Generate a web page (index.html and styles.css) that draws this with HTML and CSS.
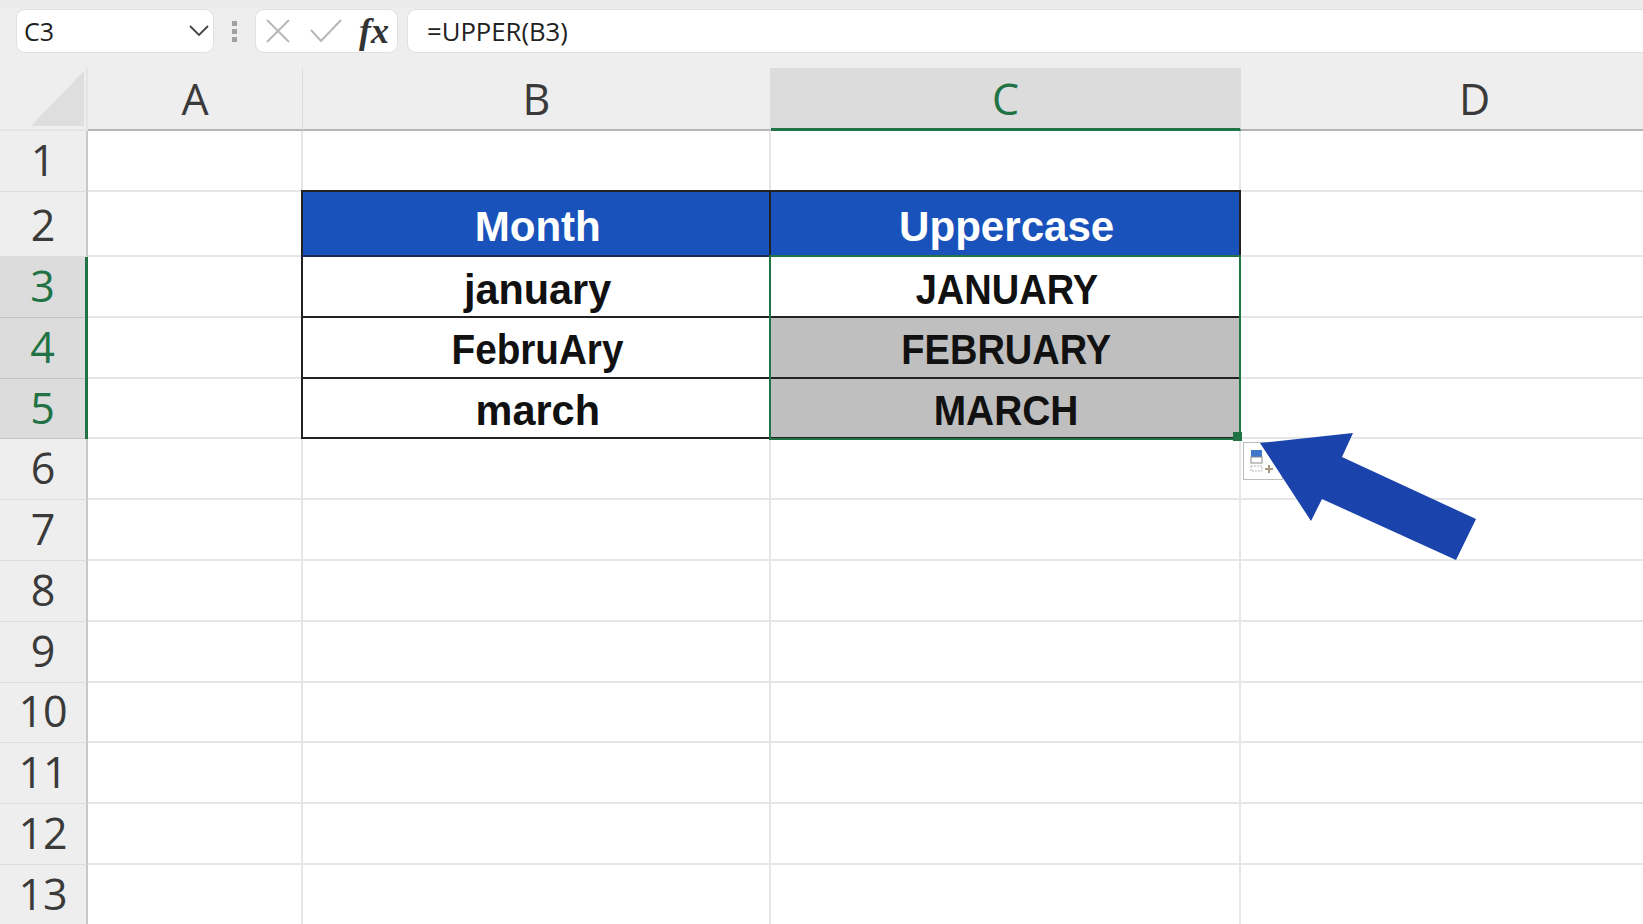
FILE: index.html
```html
<!DOCTYPE html>
<html lang="en">
<head>
<meta charset="utf-8">
<title>Excel UPPER</title>
<link rel="stylesheet" href="styles.css">
</head>
<body>
<div class="toolbar">
  <div class="box namebox"><span>C3</span>
    <svg class="chev" width="20" height="12" viewBox="0 0 20 12"><path d="M1 1 L10 10 L19 1" fill="none" stroke="#444" stroke-width="1.8"/></svg>
  </div>
  <div class="dots"><i></i><i></i><i></i></div>
  <div class="box fxbox">
    <svg width="24" height="24" viewBox="0 0 24 24"><path d="M1 1 L23 23 M23 1 L1 23" fill="none" stroke="#b8b8b8" stroke-width="2"/></svg>
    <svg class="check" width="32" height="24" viewBox="0 0 32 24"><path d="M1 11 L11 22 L31 1" fill="none" stroke="#b8b8b8" stroke-width="2"/></svg>
    <span class="fx">fx</span>
  </div>
  <div class="box formula">=UPPER(B3)</div>
</div>
<div class="sheet">
  <div class="corner"><svg width="53" height="55" viewBox="0 0 53 55"><path d="M0 55 L53 0 L53 55 Z" fill="#dedede"/></svg></div>
  <div class="colhead">A</div><div class="colhead">B</div><div class="colhead sel">C</div><div class="colhead last">D</div>

  <div class="rowhead">1</div><div class="c"></div><div class="c"></div><div class="c"></div><div class="c"></div>
  <div class="rowhead tall">2</div><div class="c"></div><div class="c th first"><span>Month</span></div><div class="c th"><span>Uppercase</span></div><div class="c"></div>
  <div class="rowhead sel">3</div><div class="c"></div><div class="c td first lower"><span>january</span></div><div class="c td"><span>JANUARY</span></div><div class="c"></div>
  <div class="rowhead sel">4</div><div class="c"></div><div class="c td first mixed"><span>FebruAry</span></div><div class="c td grey"><span>FEBRUARY</span></div><div class="c"></div>
  <div class="rowhead sel">5</div><div class="c"></div><div class="c td first lower"><span>march</span></div><div class="c td grey short"><span>MARCH</span></div><div class="c"></div>
  <div class="rowhead">6</div><div class="c"></div><div class="c"></div><div class="c"></div><div class="c"></div>
  <div class="rowhead">7</div><div class="c"></div><div class="c"></div><div class="c"></div><div class="c"></div>
  <div class="rowhead">8</div><div class="c"></div><div class="c"></div><div class="c"></div><div class="c"></div>
  <div class="rowhead">9</div><div class="c"></div><div class="c"></div><div class="c"></div><div class="c"></div>
  <div class="rowhead">10</div><div class="c"></div><div class="c"></div><div class="c"></div><div class="c"></div>
  <div class="rowhead">11</div><div class="c"></div><div class="c"></div><div class="c"></div><div class="c"></div>
  <div class="rowhead">12</div><div class="c"></div><div class="c"></div><div class="c"></div><div class="c"></div>
  <div class="rowhead">13</div><div class="c"></div><div class="c"></div><div class="c"></div><div class="c"></div>

  <div class="selection"><div class="handle"></div></div>
  <div class="paste">
    <svg width="24" height="26" viewBox="0 0 24 26">
      <rect x="1" y="1" width="11" height="7" fill="#3f78c9"/>
      <rect x="1" y="8" width="11" height="6" fill="#fff" stroke="#8a8a8a"/>
      <rect x="1" y="17" width="11" height="5" fill="none" stroke="#b5b5b5" stroke-dasharray="2 1"/>
      <path d="M19 16 V24 M15 20 H23" stroke="#a8997f" stroke-width="2"/>
    </svg>
  </div>
  <svg class="arrow" width="240" height="140" viewBox="0 0 240 140"><polygon points="20,23 113,13 102,37 236,99 216,140 82,79 71,101" fill="#1a44ac"/></svg>
</div>
</body>
</html>
```
FILE: styles.css
```css
* { box-sizing: border-box; }
html, body { margin: 0; height: 100%; overflow: hidden; background: #eeeeee; }
body { font-family: "Open Sans", "Noto Sans", sans-serif; color: #333; width: 1643px; height: 924px; }

.toolbar { height: 68px; display: flex; align-items: flex-start; padding: 1px 0 0 16px; border-top: 8px solid #ebebeb; }
.box { height: 44px; background: #fff; border: 1px solid #e0e0e0; border-radius: 9px; display: flex; align-items: center; }
.namebox { width: 198px; padding: 0 4px 0 7px; justify-content: space-between; font-size: 25px; color: #222; }
.dots { width: 41px; height: 44px; display: flex; flex-direction: column; align-items: center; justify-content: center; gap: 3px; }
.dots i { width: 5px; height: 5px; background: #a0a0a0; display: block; }
.fxbox { width: 143px; padding: 0 0 0 10px; margin-right: 9px; }
.check { margin-left: 20px; }
.fx { font-family: "Liberation Serif", serif; font-style: italic; font-weight: 700; font-size: 36px; color: #333; line-height: 1; margin-left: 17px; }
.formula { flex: 1; padding-left: 19px; font-size: 25.7px; color: #222; border-radius: 9px 0 0 9px; border-right: 0; }

.sheet { position: relative; display: grid; grid-template-columns: 88px 215px 468px 470px 467px; grid-template-rows: 63px 61px 65px repeat(11, 60.8px); background: #fff; height: 856px; overflow: hidden; }

.corner { background: #eeeeee; border-right: 2px solid #e4e4e4; border-bottom: 2px solid #e4e4e4; display: flex; align-items: flex-end; justify-content: flex-end; padding: 0 2px 3px 0; }
.colhead { background: #eeeeee; border-right: 1px solid #dcdcdc; border-bottom: 2px solid #b5b5b5; font-size: 43px; display: flex; align-items: center; justify-content: center; color: #3a3a3a; line-height: 1; }
.colhead.last { border-right: 0; }
.colhead.sel { background: #dcdcdc; color: #217346; border-bottom: 3px solid #217346; }

.rowhead { background: #eeeeee; border-right: 2px solid #c9c9c9; border-bottom: 1px solid #dcdcdc; font-size: 43px; display: flex; align-items: center; justify-content: center; color: #3a3a3a; line-height: 1; padding: 0 0 3px 0; }
.rowhead.tall { padding: 1px 0 0 0; }
.rowhead.sel { background: #dcdcdc; color: #217346; border-right: 3px solid #217346; border-bottom: 0; box-shadow: inset 0 -1px 0 #c4c4c4; }

.c { border-right: 2px solid #e6e6e6; border-bottom: 2px solid #e6e6e6; display: flex; align-items: center; justify-content: center; }
.th, .td { font-family: "Liberation Sans", Arial, sans-serif; font-weight: 700; font-size: 42.5px; line-height: 1; color: #111; border-right: 2px solid #222; border-bottom: 2px solid #222; padding-left: 3px; }
.th span, .td span { display: inline-block; white-space: nowrap; }
.td { padding-top: 7px; }
.td span { transform: scaleX(0.895); }
.td.short span { transform: scaleX(0.915); }
.td.lower span { transform: scaleX(0.975); }
.td.mixed span { transform: scaleX(0.91); }
.th span { transform: scaleX(0.99); }
.th { background: #1a52bb; color: #fff; border-bottom-color: #1a2a55; border-top: 2px solid #222; margin-top: -2px; padding-top: 8px; }
.first { border-left: 2px solid #222; margin-left: -2px; }
.grey { background: #bfbfbf; }

.selection { position: absolute; left: 769px; top: 187px; width: 472px; height: 185px; border: 2px solid #217346; pointer-events: none; }
.handle { position: absolute; right: -3px; bottom: -3px; width: 9px; height: 9px; background: #217346; }
.paste { position: absolute; left: 1243px; top: 374px; width: 40px; height: 38px; background: #fff; border: 1px solid #bdbdbd; padding: 6px 0 0 6px; display: flex; }
.arrow { position: absolute; left: 1240px; top: 352px; }
```
